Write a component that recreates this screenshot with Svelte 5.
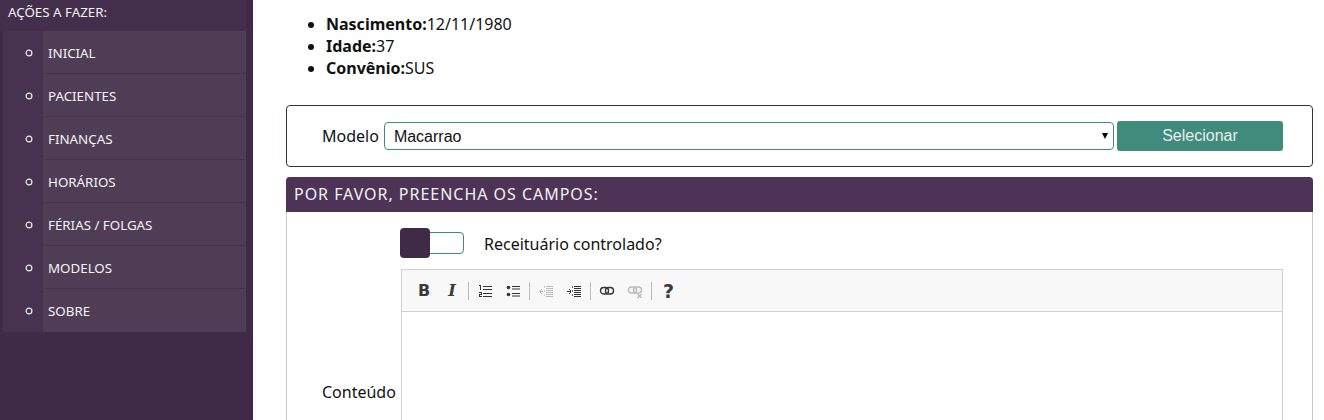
<script>
	const menu = ["INICIAL", "PACIENTES", "FINANÇAS", "HORÁRIOS", "FÉRIAS / FOLGAS", "MODELOS", "SOBRE"];
	const info = [
		["Nascimento:", "12/11/1980"],
		["Idade:", "37"],
		["Convênio:", "SUS"]
	];
</script>

<div class="page">
	<aside class="sidebar">
		<div class="side-title">AÇÕES A FAZER:</div>
		<ul class="menu">
			{#each menu as item}
				<li>
					<span class="bullet">
						<svg width="8" height="8" viewBox="0 0 8 8">
							<circle cx="4" cy="4" r="2.900" fill="none" stroke="#ece9ee" stroke-width="1.200" />
						</svg>
					</span>
					<a href="#top">{item}</a>
				</li>
			{/each}
		</ul>
	</aside>

	<main class="content">
		<ul class="info">
			{#each info as row}
				<li><b>{row[0]}</b>{row[1]}</li>
			{/each}
		</ul>

		<form class="model-box">
			<label for="modelo">Modelo</label>
			<span class="select-wrap">
				<select id="modelo">
					<option>Macarrao</option>
				</select>
			</span>
			<button type="button">Selecionar</button>
		</form>

		<section class="panel">
			<h2>POR FAVOR, PREENCHA OS CAMPOS:</h2>
			<div class="panel-body">
				<div class="switch-row">
					<span class="switch"><span class="knob"></span></span>
					<span class="switch-label">Receituário controlado?</span>
				</div>
				<div class="editor-row">
					<span class="editor-label">Conteúdo</span>
					<div class="editor">
						<div class="toolbar">
							<span class="tool t-bold">B</span>
							<span class="tool t-italic">I</span>
							<span class="sep"></span>
							<span class="tool">
								<svg width="16" height="16" viewBox="0 0 16 16" fill="#333">
									<path d="M2 2h2v5H3V3H2zM2 9h3v3H3v1h2v1H2v-3h2v-1H2z" />
									<path d="M6 3h9v1H6zM6 6h9v1H6zM6 10h9v1H6zM6 13h9v1H6z" />
								</svg>
							</span>
							<span class="tool">
								<svg width="16" height="16" viewBox="0 0 16 16" fill="#333">
									<circle cx="3.500" cy="4.500" r="1.800" />
									<circle cx="3.500" cy="11.500" r="1.800" />
									<path d="M7 3h8v1H7zM7 5.500h8v1H7zM7 10h8v1H7zM7 12.500h8v1H7z" />
								</svg>
							</span>
							<span class="sep"></span>
							<span class="tool off">
								<svg width="16" height="16" viewBox="0 0 16 16" fill="#333">
									<path d="M8 3h7v1H8zM8 5h7v1H8zM8 7h7v1H8zM8 9h7v1H8zM8 11h7v1H8zM8 13h7v1H8z" />
									<path d="M1 8h4v1H1zM3 6h1v1H3zM2 7h1v1H2zM2 9h1v1H2zM3 10h1v1H3z" />
									<path d="M6 3h1v2H6zM6 7h1v2H6zM6 11h1v2H6z" opacity=".7" />
								</svg>
							</span>
							<span class="tool">
								<svg width="16" height="16" viewBox="0 0 16 16" fill="#333">
									<path d="M8 3h7v1H8zM8 5h7v1H8zM8 7h7v1H8zM8 9h7v1H8zM8 11h7v1H8zM8 13h7v1H8z" />
									<path d="M1 8h4v1H1zM3 6h1v1H3zM4 7h1v1H4zM4 9h1v1H4zM3 10h1v1H3z" />
									<path d="M6 3h1v2H6zM6 7h1v2H6zM6 11h1v2H6z" opacity=".7" />
								</svg>
							</span>
							<span class="sep"></span>
							<span class="tool">
								<svg width="16" height="16" viewBox="0 0 16 16" fill="none" stroke="#333" stroke-width="1.400">
									<rect x="1.500" y="4.500" width="8" height="6.500" rx="3.200" />
									<rect x="6.500" y="4.500" width="8" height="6.500" rx="3.200" />
								</svg>
							</span>
							<span class="tool off">
								<svg width="16" height="16" viewBox="0 0 16 16" fill="none" stroke="#333" stroke-width="1.400">
									<rect x="1.500" y="4" width="8" height="6" rx="3" />
									<rect x="6.500" y="4" width="8" height="6" rx="3" />
									<path d="M10.500 11l4 4M14.500 11l-4 4" />
								</svg>
							</span>
							<span class="sep"></span>
							<span class="tool t-help">?</span>
						</div>
						<div class="editor-area"></div>
					</div>
				</div>
			</div>
		</section>
	</main>
</div>

<style>
:global(body) {
	margin: 0;
	background: #fff;
	overflow: hidden;
}
.page {
	display: flex;
	height: 420px;
	overflow: hidden;
	font-family: "Noto Sans", sans-serif;
	font-size: 16px;
	color: #111;
}
.sidebar {
	width: 253px;
	flex: none;
	background: #3f2b47;
	box-sizing: border-box;
	padding-right: 7px;
}
.side-title {
	height: 31px;
	box-sizing: border-box;
	padding: 3px 0 0 8px;
	font-size: 13.333px;
	line-height: 18px;
	color: #f2f0f3;
	background: #432f4b;
}
.menu {
	list-style: none;
	margin: 0 0 0 3px;
	padding: 0;
	background: #473350;
	border-radius: 0 0 2px 2px;
	overflow: hidden;
}
.menu li {
	display: flex;
	height: 43px;
}
.bullet {
	width: 40px;
	flex: none;
	display: flex;
	align-items: center;
	justify-content: center;
	padding-left: 11px;
	box-sizing: border-box;
}
.menu a {
	flex: 1;
	display: flex;
	align-items: center;
	padding: 2px 0 0 5px;
	font-size: 13.333px;
	color: #f5f3f5;
	text-decoration: none;
	background: #4f3d56;
	border-bottom: 1px solid #463350;
}
.menu li:last-child a {
	border-bottom-color: #4f3d56;
}
.content {
	flex: 1;
	min-width: 0;
	box-sizing: border-box;
	padding: 13px 11px 0 33px;
}
.info {
	margin: 0 0 26px;
	padding-left: 40px;
	line-height: 22px;
}
.info b {
	font-weight: 700;
}
.model-box {
	display: flex;
	align-items: center;
	height: 62px;
	box-sizing: border-box;
	border: 1px solid #3f2b47;
	border-radius: 4px;
	padding: 0 29px 0 35px;
	margin-bottom: 10px;
}
.model-box label {
	margin-right: 5px;
}
.select-wrap {
	position: relative;
	flex: 1;
	min-width: 0;
	display: block;
}
.select-wrap::after {
	content: "";
	position: absolute;
	right: 6px;
	top: 11px;
	border-style: solid;
	border-width: 6px 3px 0;
	border-color: #000 transparent transparent;
}
.select-wrap select {
	display: block;
	width: 100%;
	height: 28px;
	box-sizing: border-box;
	appearance: none;
	border: 1px solid #418b7c;
	border-radius: 4px;
	background: #fff;
	padding: 0 20px 0 9px;
	font-family: "Liberation Sans", sans-serif;
	font-size: 16px;
	color: #111;
}
.model-box button {
	width: 166px;
	height: 30px;
	margin-left: 3px;
	border: 0;
	border-radius: 3px;
	background: #418b7c;
	color: #e6f0ed;
	font-family: "Liberation Sans", sans-serif;
	font-size: 16px;
}
.panel {
	border: 1px solid #c9c9c9;
	border-radius: 4px 4px 0 0;
	border-bottom: 0;
}
.panel h2 {
	margin: -1px -1px 0;
	height: 35px;
	box-sizing: border-box;
	padding-left: 8px;
	background: #4d3457;
	border-radius: 4px 4px 0 0;
	color: #f3f0f4;
	font-size: 16px;
	font-weight: 400;
	line-height: 35px;
	letter-spacing: 0.97px;
}
.panel-body {
	padding: 16px 29px 0 35px;
}
.switch-row {
	display: flex;
	align-items: center;
	height: 30px;
	margin-left: 78px;
	margin-bottom: 11px;
}
.switch {
	position: relative;
	display: block;
	width: 64px;
	height: 22px;
	box-sizing: border-box;
	border: 1px solid #418b7c;
	border-radius: 4px;
}
.knob {
	position: absolute;
	left: -1px;
	top: -5px;
	width: 30px;
	height: 30px;
	background: #3f2b47;
	border-radius: 4px;
}
.switch-label {
	margin: 2px 0 0 20px;
}
.editor-row {
	display: flex;
	align-items: flex-start;
}
.editor-label {
	width: 79px;
	flex: none;
	margin-top: 112px;
	line-height: 22px;
}
.editor {
	flex: 1;
	min-width: 0;
	border: 1px solid #d1d1d1;
	height: 300px;
	box-sizing: border-box;
}
.toolbar {
	display: flex;
	align-items: center;
	height: 42px;
	box-sizing: border-box;
	padding-left: 8px;
	background: #f8f8f8;
	border-bottom: 1px solid #d1d1d1;
}
.tool {
	width: 28px;
	height: 16px;
	display: flex;
	align-items: center;
	justify-content: center;
	color: #3a3a3a;
	line-height: 16px;
}
.off {
	opacity: 0.3;
}
.t-bold {
	font-family: "DejaVu Sans", sans-serif;
	font-weight: 700;
	font-size: 16px;
}
.t-italic {
	font-family: "DejaVu Serif", serif;
	font-style: italic;
	font-weight: 700;
	font-size: 16px;
}
.t-help {
	font-family: "DejaVu Sans", sans-serif;
	font-weight: 700;
	font-size: 19px;
	padding-left: 1px;
	box-sizing: border-box;
}
.sep {
	width: 1px;
	height: 18px;
	background: #bcbcbc;
	margin: 0 2px;
}
.editor-area {
	height: 250px;
	background: #fff;
}
</style>
